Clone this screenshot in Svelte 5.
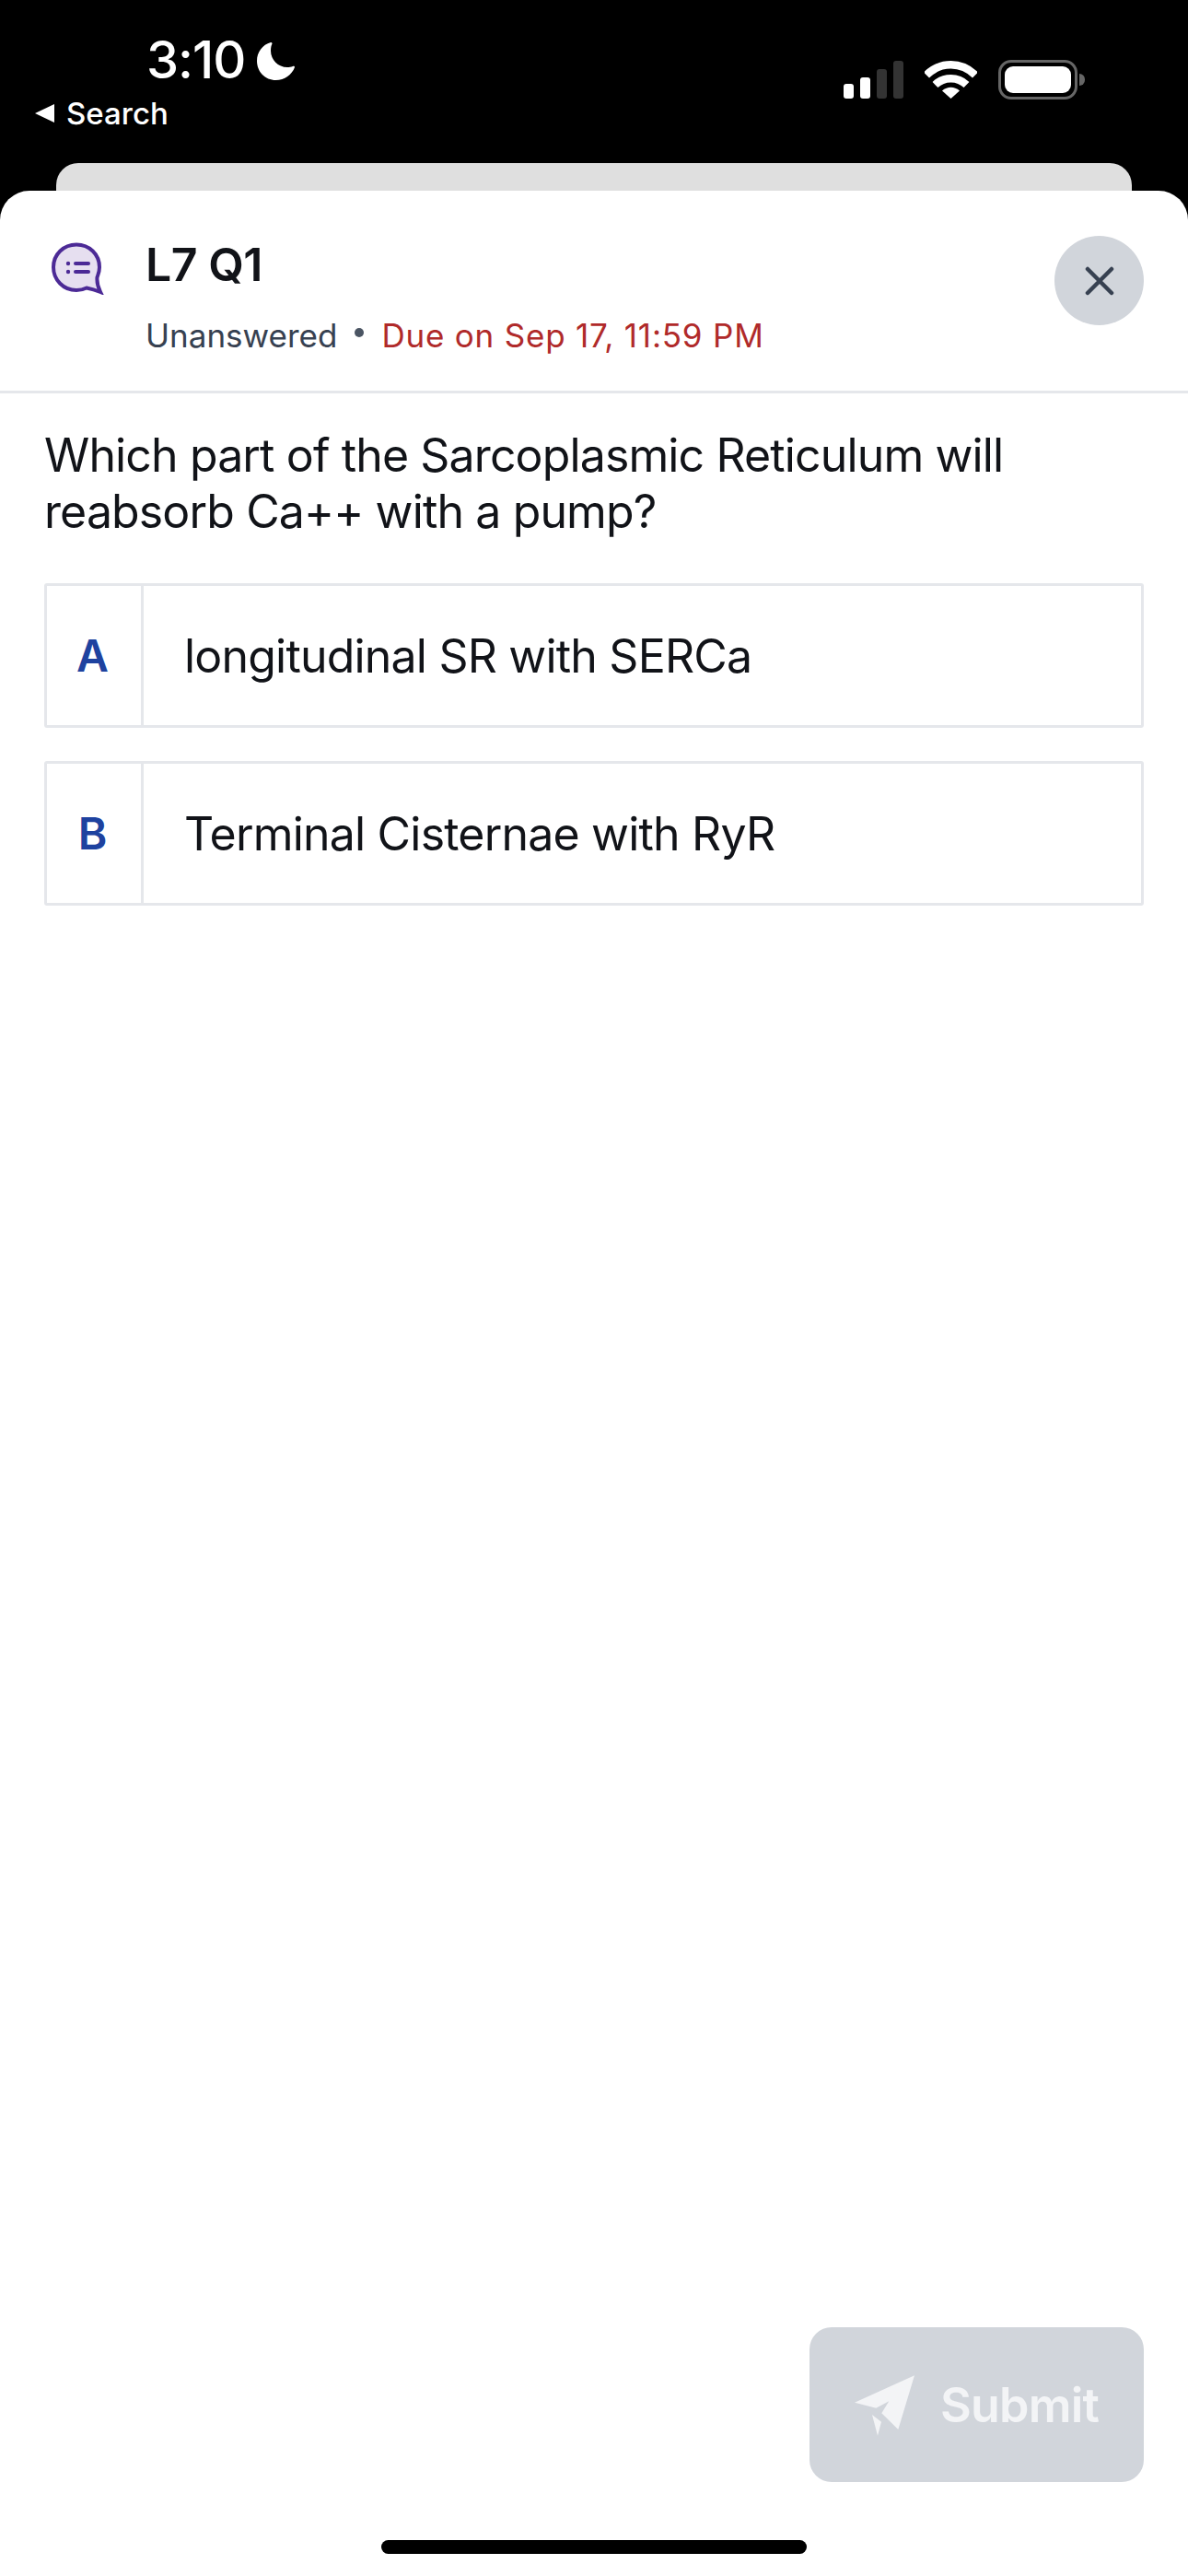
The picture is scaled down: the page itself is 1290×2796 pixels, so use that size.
<script>
  const options = [
    { letter: 'A', text: 'longitudinal SR with SERCa' },
    { letter: 'B', text: 'Terminal Cisternae with RyR' }
  ];
</script>

<div class="screen">
  <header class="status">
    <div class="left">
      <div class="clock">
        <span class="time">3:10</span>
        <svg class="moon" width="41" height="41" viewBox="0 0 41 41">
          <path d="M15 0C6 2.5 0 10.5 0 20C0 32 9 41 20.5 41C30 41 38 35 41 27C41 26 40 25.5 39 26C37 26.8 35 27 33 27C23 27 15 19 15 9C15 6 15.5 3 16.5 1.5C16.5 0.5 16 0 15 0Z" fill="#fff" />
        </svg>
      </div>
      <div class="back">
        <svg width="21" height="20" viewBox="0 0 21 20"><path d="M0 10L21 0V20Z" fill="#fff" /></svg>
        <span>Search</span>
      </div>
    </div>
    <div class="right">
      <div class="signal">
        <i class="bar on b1"></i>
        <i class="bar on b2"></i>
        <i class="bar b3"></i>
        <i class="bar b4"></i>
      </div>
      <svg class="wifi" width="57" height="42" viewBox="0 0 57 42">
        <path d="M2 16.5C17 1.5 40 1.5 55 16.5" fill="none" stroke="#fff" stroke-width="8.5" />
        <path d="M11.5 27C21 18 36 18 45.5 27" fill="none" stroke="#fff" stroke-width="8.5" />
        <path d="M19 33.5C25 28.5 32 28.5 38 33.5L28.5 42Z" fill="#fff" />
      </svg>
      <div class="battery">
        <div class="cell"><div class="level"></div></div>
        <div class="nub"></div>
      </div>
    </div>
  </header>

  <div class="peek"></div>

  <main class="sheet">
    <section class="head">
      <svg class="bubble" width="57" height="57" viewBox="0 0 57 57">
        <path d="M27 2.5C41 2.5 52 13 52 27C52 32 50.5 35 49.5 38C49 44 50.5 49 53 54C48 52 43 50.5 38 49.5C35 51 31 52 27 52C13 52 2 41 2 27C2 13 13 2.5 27 2.5Z" fill="#e6dff0" stroke="#4c2a96" stroke-width="4" />
        <circle cx="18" cy="23" r="2.2" fill="#4c2a96" />
        <circle cx="18" cy="32" r="2.2" fill="#4c2a96" />
        <rect x="24" y="21" width="18" height="4" rx="2" fill="#4c2a96" />
        <rect x="24" y="30" width="18" height="4" rx="2" fill="#4c2a96" />
      </svg>
      <div class="info">
        <h1>L7 Q1</h1>
        <p class="meta">
          <span>Unanswered</span>
          <b class="dot"></b>
          <span class="due">Due on Sep 17, 11:59 PM</span>
        </p>
      </div>
      <button class="close" aria-label="Close">
        <svg width="32" height="32" viewBox="0 0 32 32">
          <path d="M3 3L29 29M29 3L3 29" stroke="#374151" stroke-width="4.5" stroke-linecap="round" />
        </svg>
      </button>
    </section>

    <section class="body">
      <h2>Which part of the Sarcoplasmic Reticulum will reabsorb Ca++ with a pump?</h2>
      <div class="options">
        {#each options as opt}
          <div class="option">
            <div class="letter">{opt.letter}</div>
            <div class="text">{opt.text}</div>
          </div>
        {/each}
      </div>
    </section>

    <footer class="foot">
      <button class="submit">
        <svg width="65" height="66" viewBox="0 0 65 66">
          <path d="M65 0.3L0 29.7L23.3 35.7L37.3 28.3L29.3 41.3L47.3 59Z" fill="#f3f4f6" />
          <path d="M19 43L29 50.7L25 65.7Z" fill="#f3f4f6" />
        </svg>
        <span>Submit</span>
      </button>
    </footer>
    <div class="home"></div>
  </main>
</div>

<style>
  :global(body) {
    background: #000;
  }

  .screen {
    width: 1290px;
    height: 2796px;
    display: flex;
    flex-direction: column;
    background: #000;
    font-family: Inter, "Liberation Sans", sans-serif;
    overflow: hidden;
  }

  .status {
    height: 177px;
    display: flex;
    justify-content: space-between;
    color: #fff;
  }

  .left {
    padding: 34px 0 0 38px;
  }

  .clock {
    display: flex;
    align-items: center;
    gap: 13px;
    height: 62px;
    padding-left: 121px;
  }

  .time {
    font-size: 56px;
    font-weight: 500;
    letter-spacing: -1px;
    line-height: 62px;
  }

  .moon {
    margin-top: 2px;
  }

  .back {
    display: flex;
    align-items: center;
    gap: 13px;
    font-size: 33px;
    font-weight: 500;
    line-height: 40px;
    margin-top: 7px;
  }

  .right {
    display: flex;
    align-items: flex-start;
    padding: 65px 112px 0 0;
  }

  .signal {
    display: flex;
    align-items: flex-end;
    gap: 7px;
    height: 42px;
    margin-right: 23px;
  }

  .bar {
    display: block;
    width: 11px;
    border-radius: 3px;
    background: #333;
  }

  .bar.on {
    background: #fff;
  }

  .b1 { height: 16px; }
  .b2 { height: 23px; }
  .b3 { height: 32px; }
  .b4 { height: 41px; }

  .wifi {
    margin-right: 23px;
  }

  .battery {
    display: flex;
    align-items: center;
    height: 43px;
  }

  .cell {
    width: 86px;
    height: 43px;
    box-sizing: border-box;
    border: 3px solid #666;
    border-radius: 14px;
    padding: 4px;
  }

  .level {
    height: 100%;
    background: #fff;
    border-radius: 9px;
  }

  .nub {
    width: 6px;
    height: 13px;
    margin-left: 2px;
    background: #666;
    border-radius: 0 7px 7px 0;
  }

  .peek {
    height: 30px;
    margin: 0 61px;
    background: #dfdfdf;
    border-radius: 24px 24px 0 0;
  }

  .sheet {
    flex: 1;
    display: flex;
    flex-direction: column;
    background: #fff;
    border-radius: 32px 32px 0 0;
  }

  .head {
    display: flex;
    align-items: flex-start;
    height: 220px;
    box-sizing: border-box;
    padding: 56px 48px 0 56px;
    border-bottom: 3px solid #e5e7eb;
  }

  .info {
    flex: 1;
    margin-left: 45px;
  }

  h1 {
    margin: -8px 0 0;
    font-size: 50px;
    font-weight: 600;
    letter-spacing: -0.5px;
    line-height: 64px;
    color: #111318;
  }

  .meta {
    display: flex;
    align-items: center;
    margin: 22px 0 0;
    font-size: 35px;
    line-height: 46px;
    color: #374151;
  }

  .dot {
    width: 10px;
    height: 10px;
    margin: 0 19px 6px 19px;
    border-radius: 50%;
    background: #4b5563;
  }

  .due {
    color: #b02a2a;
    letter-spacing: 0.8px;
  }

  .close {
    width: 97px;
    height: 97px;
    margin-top: -7px;
    padding: 0;
    border: 0;
    border-radius: 50%;
    background: #d1d5db;
    display: flex;
    align-items: center;
    justify-content: center;
  }

  .body {
    padding: 37px 48px 0;
  }

  h2 {
    margin: 0;
    font-size: 50px;
    font-weight: 400;
    letter-spacing: -0.87px;
    line-height: 61px;
    color: #111318;
    max-width: 1100px;
  }

  .options {
    display: flex;
    flex-direction: column;
    gap: 36px;
    margin-top: 47px;
  }

  .option {
    display: flex;
    height: 157px;
    box-sizing: border-box;
    border: 3px solid #e5e7eb;
    border-radius: 3px;
  }

  .letter {
    width: 105px;
    display: flex;
    align-items: center;
    justify-content: center;
    border-right: 3px solid #e5e7eb;
    font-size: 48px;
    font-weight: 600;
    color: #1e429f;
    padding-right: 3px;
    box-sizing: border-box;
  }

  .text {
    display: flex;
    align-items: center;
    padding-left: 44px;
    font-size: 50px;
    letter-spacing: -0.8px;
    color: #111318;
  }

  .foot {
    margin-top: auto;
    display: flex;
    justify-content: flex-end;
    padding-right: 48px;
  }

  .submit {
    width: 363px;
    height: 168px;
    display: flex;
    align-items: center;
    justify-content: center;
    gap: 28px;
    padding: 0;
    border: 0;
    border-radius: 24px;
    background: #d1d5db;
    color: #f3f4f6;
    font-family: inherit;
    font-size: 52px;
    font-weight: 600;
    letter-spacing: -0.8px;
  }

  .submit svg {
    margin-top: 1px;
  }

  .home {
    width: 462px;
    height: 15px;
    margin: 63px auto 24px;
    background: #000;
    border-radius: 8px;
  }
</style>
